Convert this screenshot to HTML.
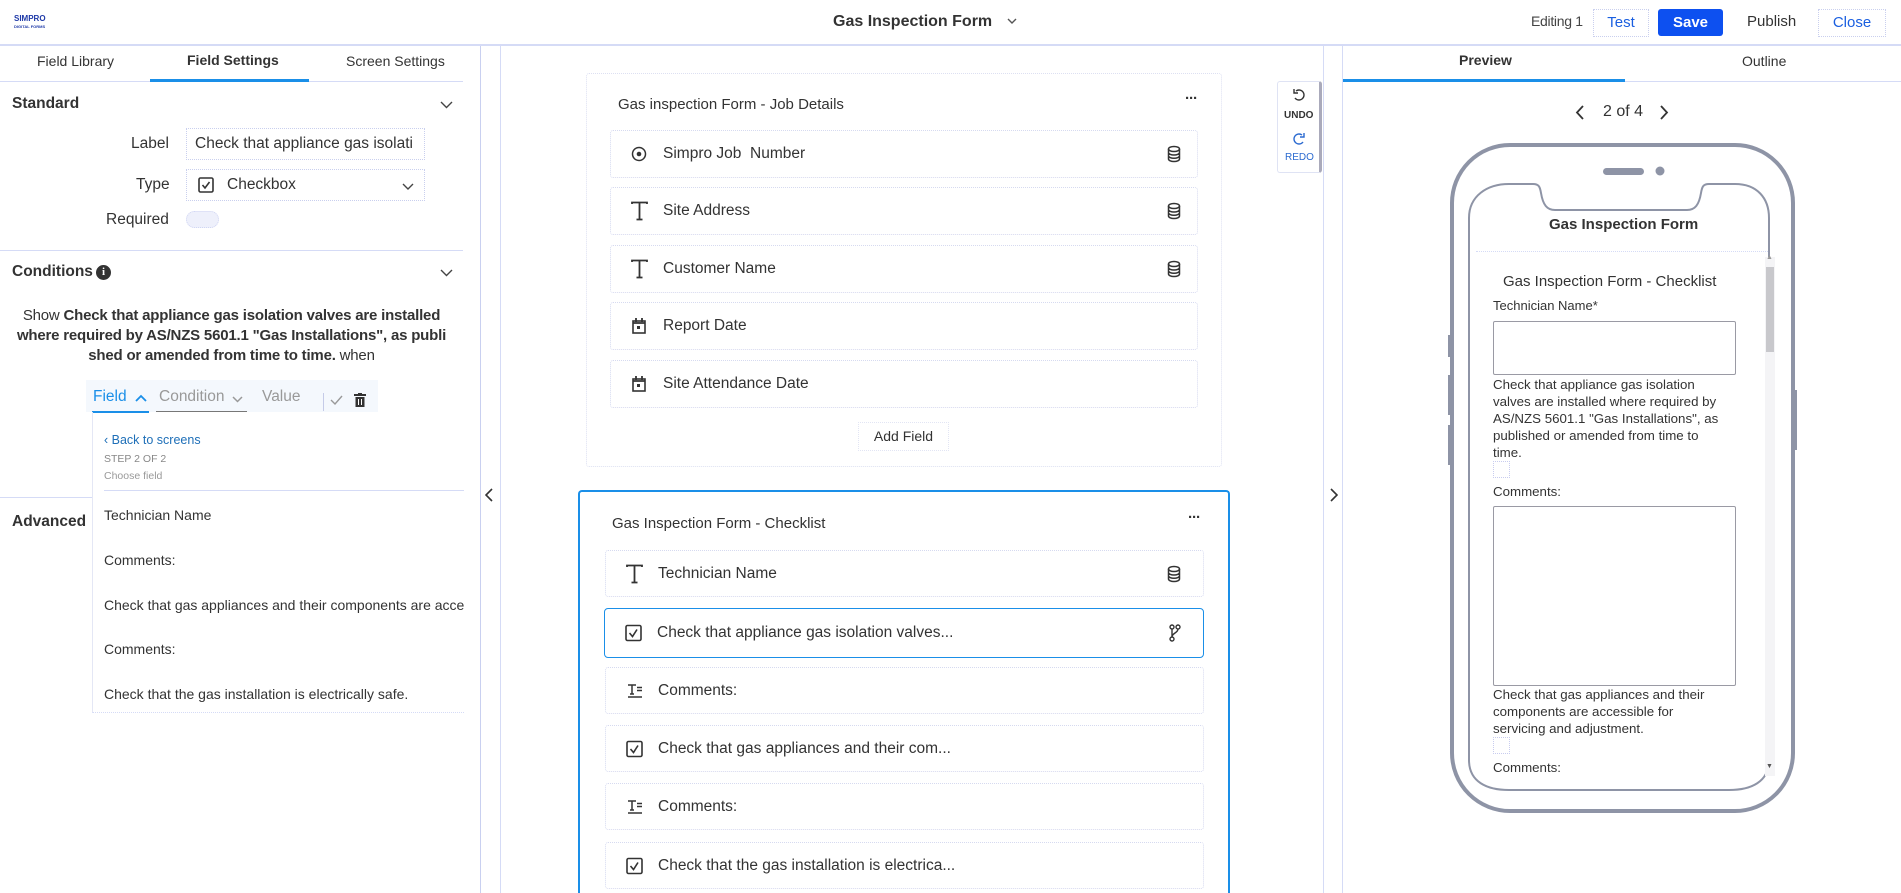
<!DOCTYPE html>
<html><head><meta charset="utf-8">
<style>
*{box-sizing:border-box;margin:0;padding:0}
html{height:893px;overflow:hidden}
body{width:1901px;height:893px;overflow:hidden;background:#fff;font-family:"Liberation Sans",sans-serif;color:#333;position:relative}
.a{position:absolute;white-space:nowrap}
.dl{border:1px dotted #c9cfee}
.row{position:absolute;border:1px dotted #d6daf0;border-radius:3px}
.row .t{position:absolute;top:50%;transform:translateY(-50%);font-size:15.5px;color:#333}
.row svg{position:absolute;top:50%;transform:translateY(-50%)}
</style></head><body>

<!-- top bar -->
<div class="a" style="left:14px;top:15px;font:bold 8px 'Liberation Sans';color:#1f3aa8;line-height:7px">SIMPRO<br><span style="font-size:4px">DIGITAL FORMS</span></div>
<div class="a" style="left:833px;top:13px;font-size:16px;font-weight:bold;color:#333">Gas Inspection Form</div>
<svg class="a" style="left:1007px;top:18px" width="10" height="7"><path d="M1 1l4 4 4-4" fill="none" stroke="#555" stroke-width="1.4"/></svg>
<div class="a" style="left:1531px;top:13px;font-size:14px;color:#444;letter-spacing:-0.3px">Editing 1</div>
<div class="a dl" style="left:1593px;top:9px;width:56px;height:28px;text-align:center;line-height:26px;font-size:15px;color:#1a5fe0">Test</div>
<div class="a" style="left:1658px;top:9px;width:65px;height:27px;background:#0d50f0;border-radius:3px;color:#fff;font-weight:bold;text-align:center;line-height:27px;font-size:15px">Save</div>
<div class="a" style="left:1747px;top:13px;font-size:15px;color:#333">Publish</div>
<div class="a dl" style="left:1818px;top:9px;width:68px;height:28px;text-align:center;line-height:26px;font-size:15px;color:#1a5fe0">Close</div>
<div class="a" style="left:0;top:44px;width:1901px;height:2px;background:#d5dbf6"></div>

<!-- left panel -->
<div class="a" style="left:480px;top:46px;width:1px;height:847px;background:#c9d0f0"></div>
<div class="a" style="left:37px;top:53px;font-size:14px">Field Library</div>
<div class="a" style="left:187px;top:52px;font-size:14px;font-weight:bold">Field Settings</div>
<div class="a" style="left:346px;top:53px;font-size:14px">Screen Settings</div>
<div class="a" style="left:0;top:81px;width:463px;height:1px;background:#d5dbf6"></div>
<div class="a" style="left:150px;top:79px;width:159px;height:3px;background:#1a8fe8"></div>
<div class="a" style="left:12px;top:95px;font-size:15.5px;font-weight:bold">Standard</div>
<svg class="a" style="left:440px;top:101px" width="13" height="8"><path d="M1 1l5.5 5.5L12 1" fill="none" stroke="#444" stroke-width="1.4"/></svg>
<div class="a" style="left:131px;top:135px;font-size:15.5px">Label</div>
<div class="a dl" style="left:186px;top:128px;width:239px;height:32px;font-size:15.5px;padding:6px 8px;overflow:hidden">Check that appliance gas isolati</div>
<div class="a" style="left:136px;top:176px;font-size:15.5px">Type</div>
<div class="a dl" style="left:186px;top:169px;width:239px;height:32px"></div>
<svg class="a" style="left:198px;top:177px" width="17" height="17"><rect x="1" y="1" width="14" height="14" rx="1.5" fill="none" stroke="#333" stroke-width="1.6"/><path d="M4.5 8l2.5 3 4.5-6" fill="none" stroke="#333" stroke-width="1.6"/></svg>
<div class="a" style="left:227px;top:176px;font-size:15.5px">Checkbox</div>
<svg class="a" style="left:402px;top:183px" width="12" height="8"><path d="M1 1l5 5 5-5" fill="none" stroke="#444" stroke-width="1.4"/></svg>
<div class="a" style="left:106px;top:211px;font-size:15.5px">Required</div>
<div class="a" style="left:186px;top:211px;width:33px;height:17px;border-radius:9px;background:#eef0fb;border:1px dotted #d0d5f3"></div>
<div class="a" style="left:0;top:250px;width:463px;height:1px;background:#d5dbf6"></div>
<div class="a" style="left:12px;top:263px;font-size:15.5px;font-weight:bold">Conditions</div>
<div class="a" style="left:96px;top:265px;width:15px;height:15px;border-radius:50%;background:#333;color:#fff;font:bold 11px 'Liberation Serif';text-align:center;line-height:15px">i</div>
<svg class="a" style="left:440px;top:269px" width="13" height="8"><path d="M1 1l5.5 5.5L12 1" fill="none" stroke="#444" stroke-width="1.4"/></svg>
<div class="a" style="left:0px;top:306px;width:463px;text-align:center;font-size:15px;line-height:20px;letter-spacing:-0.2px">Show <b>Check that appliance gas isolation valves are installed</b><br><b>where required by AS/NZS 5601.1 "Gas Installations", as publi</b><br><b>shed or amended from time to time.</b> when</div>
<div class="a" style="left:86px;top:380px;width:292px;height:32px;background:#f4f8fd"></div>
<div class="a" style="left:93px;top:388px;font-size:15.5px;color:#1a8fe8">Field</div>
<svg class="a" style="left:135px;top:394px" width="12" height="8"><path d="M1 7l5-5 5 5" fill="none" stroke="#1a8fe8" stroke-width="1.8"/></svg>
<div class="a" style="left:92px;top:411px;width:57px;height:2px;background:#1a8fe8"></div>
<div class="a" style="left:159px;top:388px;font-size:15.5px;color:#999">Condition</div>
<svg class="a" style="left:232px;top:396px" width="11" height="7"><path d="M1 1l4.5 4.5L10 1" fill="none" stroke="#999" stroke-width="1.5"/></svg>
<div class="a" style="left:156px;top:411px;width:91px;height:1px;background:#777"></div>
<div class="a" style="left:262px;top:388px;font-size:15.5px;color:#999">Value</div>
<div class="a" style="left:323px;top:393px;width:1px;height:18px;background:#c5cbe8"></div>
<svg class="a" style="left:330px;top:395px" width="13" height="10"><path d="M1 5l4 4 7-8" fill="none" stroke="#999" stroke-width="1.4"/></svg>
<svg class="a" style="left:354px;top:393px" width="12" height="14"><path d="M0 2h12M4 1h4" stroke="#333" stroke-width="2"/><rect x="1.5" y="4" width="9" height="10" fill="#333"/><path d="M4.5 6v6M7.5 6v6" stroke="#fff" stroke-width="1"/></svg>
<div class="a" style="left:92px;top:412px;width:372px;height:301px;border-left:1px solid #e4e7f5;border-bottom:1px dotted #d5dbf6"></div>
<div class="a" style="left:0;top:497px;width:92px;height:1px;background:#d5dbf6"></div>
<div class="a" style="left:12px;top:513px;font-size:15.5px;font-weight:bold">Advanced</div>
<div class="a" style="left:104px;top:433px;font-size:12.5px;color:#1e6fb8">&lsaquo; Back to screens</div>
<div class="a" style="left:104px;top:453px;font-size:10.5px;color:#888">STEP 2 OF 2</div>
<div class="a" style="left:104px;top:470px;font-size:10.5px;color:#999">Choose field</div>
<div class="a" style="left:104px;top:490px;width:360px;height:1px;background:#d5dbf6"></div>
<div class="a" style="left:104px;top:507px;font-size:14px">Technician Name</div>
<div class="a" style="left:104px;top:552px;font-size:14px">Comments:</div>
<div class="a" style="left:104px;top:597px;font-size:14px;width:360px;overflow:hidden">Check that gas appliances and their components are accessible</div>
<div class="a" style="left:104px;top:641px;font-size:14px">Comments:</div>
<div class="a" style="left:104px;top:686px;font-size:14px">Check that the gas installation is electrically safe.</div>

<!-- middle -->
<div class="a" style="left:500px;top:46px;width:1px;height:847px;background:#d5dbf6"></div>
<div class="a" style="left:1323px;top:46px;width:1px;height:847px;background:#d5dbf6"></div>
<div class="a" style="left:1342px;top:46px;width:1px;height:847px;background:#d5dbf6"></div>
<svg class="a" style="left:485px;top:488px" width="8" height="14"><path d="M7 1L1 7l6 6" fill="none" stroke="#333" stroke-width="1.6"/></svg>
<svg class="a" style="left:1330px;top:488px" width="8" height="14"><path d="M1 1l6 6-6 6" fill="none" stroke="#333" stroke-width="1.6"/></svg>

<div class="a" style="left:586px;top:73px;width:636px;height:394px;border:1px dotted #dde0f2;border-radius:3px"></div>
<div class="a" style="left:618px;top:96px;font-size:15px">Gas inspection Form - Job Details</div>
<div class="a" style="left:1185px;top:90px;font-size:15px;font-weight:bold;letter-spacing:-1px">···</div>

<div class="row" style="left:610px;top:130px;width:588px;height:48px"><svg style="left:20px" width="16" height="16"><circle cx="8" cy="8" r="6.5" fill="none" stroke="#333" stroke-width="1.5"/><circle cx="8" cy="8" r="2.3" fill="#333"/></svg><div class="t" style="left:52px">Simpro Job&nbsp; Number</div><svg style="left:556px" width="14" height="17"><g fill="none" stroke="#333" stroke-width="1.5"><ellipse cx="7" cy="3.5" rx="5.5" ry="2.5"/><path d="M1.5 3.5v10c0 1.4 2.5 2.5 5.5 2.5s5.5-1.1 5.5-2.5v-10M1.5 7c0 1.4 2.5 2.5 5.5 2.5S12.5 8.4 12.5 7M1.5 10.3c0 1.4 2.5 2.5 5.5 2.5s5.5-1.1 5.5-2.5"/></g></svg></div>
<div class="row" style="left:610px;top:187px;width:588px;height:48px"><svg style="left:20px" width="17" height="19"><path d="M1 2.5V1h15v1.5M8.5 1v17M5.5 18h6" fill="none" stroke="#333" stroke-width="1.8"/></svg><div class="t" style="left:52px">Site Address</div><svg style="left:556px" width="14" height="17"><g fill="none" stroke="#333" stroke-width="1.5"><ellipse cx="7" cy="3.5" rx="5.5" ry="2.5"/><path d="M1.5 3.5v10c0 1.4 2.5 2.5 5.5 2.5s5.5-1.1 5.5-2.5v-10M1.5 7c0 1.4 2.5 2.5 5.5 2.5S12.5 8.4 12.5 7M1.5 10.3c0 1.4 2.5 2.5 5.5 2.5s5.5-1.1 5.5-2.5"/></g></svg></div>
<div class="row" style="left:610px;top:245px;width:588px;height:48px"><svg style="left:20px" width="17" height="19"><path d="M1 2.5V1h15v1.5M8.5 1v17M5.5 18h6" fill="none" stroke="#333" stroke-width="1.8"/></svg><div class="t" style="left:52px">Customer Name</div><svg style="left:556px" width="14" height="17"><g fill="none" stroke="#333" stroke-width="1.5"><ellipse cx="7" cy="3.5" rx="5.5" ry="2.5"/><path d="M1.5 3.5v10c0 1.4 2.5 2.5 5.5 2.5s5.5-1.1 5.5-2.5v-10M1.5 7c0 1.4 2.5 2.5 5.5 2.5S12.5 8.4 12.5 7M1.5 10.3c0 1.4 2.5 2.5 5.5 2.5s5.5-1.1 5.5-2.5"/></g></svg></div>
<div class="row" style="left:610px;top:302px;width:588px;height:48px"><svg style="left:21px" width="14" height="16"><rect x="1" y="3" width="12" height="12" fill="none" stroke="#333" stroke-width="1.6"/><path d="M1 5h12M4 0v4M10 0v4" stroke="#333" stroke-width="1.8"/><rect x="5" y="8" width="3" height="3" fill="#333"/></svg><div class="t" style="left:52px">Report Date</div></div>
<div class="row" style="left:610px;top:360px;width:588px;height:48px"><svg style="left:21px" width="14" height="16"><rect x="1" y="3" width="12" height="12" fill="none" stroke="#333" stroke-width="1.6"/><path d="M1 5h12M4 0v4M10 0v4" stroke="#333" stroke-width="1.8"/><rect x="5" y="8" width="3" height="3" fill="#333"/></svg><div class="t" style="left:52px">Site Attendance Date</div></div>
<div class="a dl" style="left:858px;top:422px;width:91px;height:29px;text-align:center;line-height:27px;font-size:14px;border-color:#e2e5f4">Add Field</div>

<div class="a" style="left:1277px;top:81px;width:45px;height:92px;border:1px solid #dfe3f4;border-right:3px solid #aab;border-radius:3px"></div>
<svg class="a" style="left:1292px;top:88px" width="14" height="14"><path d="M4 3a5 5 0 1 1-1 7" fill="none" stroke="#333" stroke-width="1.4"/><path d="M2 1v4h4" fill="none" stroke="#333" stroke-width="1.4"/></svg>
<div class="a" style="left:1284px;top:110px;font-size:10px;font-weight:bold;color:#333">UNDO</div>
<svg class="a" style="left:1292px;top:132px" width="14" height="14"><path d="M10 3a5 5 0 1 0 1 7" fill="none" stroke="#2b6ad0" stroke-width="1.4"/><path d="M12 1v4H8" fill="none" stroke="#2b6ad0" stroke-width="1.4"/></svg>
<div class="a" style="left:1285px;top:152px;font-size:10px;color:#2b6ad0">REDO</div>

<div class="a" style="left:578px;top:490px;width:652px;height:403px;border:2px solid #1a8fe8;border-bottom:none;border-radius:4px 4px 0 0"></div>
<div class="a" style="left:612px;top:515px;font-size:15px">Gas Inspection Form - Checklist</div>
<div class="a" style="left:1188px;top:509px;font-size:15px;font-weight:bold;letter-spacing:-1px">···</div>
<div class="row" style="left:605px;top:550px;width:599px;height:47px"><svg style="left:20px" width="17" height="19"><path d="M1 2.5V1h15v1.5M8.5 1v17M5.5 18h6" fill="none" stroke="#333" stroke-width="1.8"/></svg><div class="t" style="left:52px">Technician Name</div><svg style="left:561px" width="14" height="17"><g fill="none" stroke="#333" stroke-width="1.5"><ellipse cx="7" cy="3.5" rx="5.5" ry="2.5"/><path d="M1.5 3.5v10c0 1.4 2.5 2.5 5.5 2.5s5.5-1.1 5.5-2.5v-10M1.5 7c0 1.4 2.5 2.5 5.5 2.5S12.5 8.4 12.5 7M1.5 10.3c0 1.4 2.5 2.5 5.5 2.5s5.5-1.1 5.5-2.5"/></g></svg></div>
<div class="row" style="left:604px;top:608px;width:600px;height:50px;border:1px solid #1a8fe8;border-radius:4px"><svg style="left:20px" width="17" height="17"><rect x="1" y="1" width="15" height="15" rx="1.5" fill="none" stroke="#333" stroke-width="1.6"/><path d="M4.5 8.5l3 3.5 4.5-7" fill="none" stroke="#333" stroke-width="1.6"/></svg><div class="t" style="left:52px">Check that appliance gas isolation valves...</div><svg style="left:564px" width="12" height="18"><g fill="none" stroke="#333" stroke-width="1.4"><circle cx="3" cy="3" r="2"/><circle cx="9" cy="3" r="2"/><circle cx="3" cy="15" r="2"/><path d="M3 5v8M9 5c0 4-6 4-6 8"/></g></svg></div>
<div class="row" style="left:605px;top:667px;width:599px;height:47px"><svg style="left:21px" width="16" height="15"><path d="M1 1.5h8M5 1.5v9M3 10.5h4M10 4h5M10 7h5M1 13.5h14" fill="none" stroke="#333" stroke-width="1.5"/></svg><div class="t" style="left:52px">Comments:</div></div>
<div class="row" style="left:605px;top:725px;width:599px;height:47px"><svg style="left:20px" width="17" height="17"><rect x="1" y="1" width="15" height="15" rx="1.5" fill="none" stroke="#333" stroke-width="1.6"/><path d="M4.5 8.5l3 3.5 4.5-7" fill="none" stroke="#333" stroke-width="1.6"/></svg><div class="t" style="left:52px">Check that gas appliances and their com...</div></div>
<div class="row" style="left:605px;top:783px;width:599px;height:47px"><svg style="left:21px" width="16" height="15"><path d="M1 1.5h8M5 1.5v9M3 10.5h4M10 4h5M10 7h5M1 13.5h14" fill="none" stroke="#333" stroke-width="1.5"/></svg><div class="t" style="left:52px">Comments:</div></div>
<div class="row" style="left:605px;top:842px;width:599px;height:47px"><svg style="left:20px" width="17" height="17"><rect x="1" y="1" width="15" height="15" rx="1.5" fill="none" stroke="#333" stroke-width="1.6"/><path d="M4.5 8.5l3 3.5 4.5-7" fill="none" stroke="#333" stroke-width="1.6"/></svg><div class="t" style="left:52px">Check that the gas installation is electrica...</div></div>

<!-- right panel -->
<div class="a" style="left:1459px;top:52px;font-size:14px;font-weight:bold">Preview</div>
<div class="a" style="left:1742px;top:53px;font-size:14px">Outline</div>
<div class="a" style="left:1343px;top:81px;width:558px;height:1px;background:#d5dbf6"></div>
<div class="a" style="left:1343px;top:79px;width:282px;height:3px;background:#1a8fe8"></div>
<svg class="a" style="left:1575px;top:105px" width="9" height="15"><path d="M8 1L2 7.5 8 14" fill="none" stroke="#333" stroke-width="1.8"/></svg>
<div class="a" style="left:1603px;top:103px;font-size:16px">2 of 4</div>
<svg class="a" style="left:1660px;top:105px" width="9" height="15"><path d="M1 1l6 6.5L1 14" fill="none" stroke="#333" stroke-width="1.8"/></svg>

<svg class="a" style="left:1440px;top:140px" width="370" height="680">
<g fill="none" stroke="#8e94a6">
<rect x="12" y="5" width="341" height="666" rx="58" stroke-width="4"/>
<path d="M29 135V78c0-22 18-34 40-34h24c6 0 7 3 8 9c2 12 6 17 14 17h132c8 0 12-5 14-17c1-6 2-9 8-9h26c22 0 34 14 34 34v542c0 22-18 30-40 30H69c-22 0-40-8-40-30Z" stroke-width="2"/>
</g>
<rect x="163" y="28" width="41" height="7" rx="3.5" fill="#8e94a6"/>
<circle cx="220" cy="31" r="4.5" fill="#8e94a6"/>
<rect x="8" y="195" width="4" height="22" fill="#8e94a6"/><rect x="8" y="235" width="4" height="40" fill="#8e94a6"/><rect x="8" y="285" width="4" height="40" fill="#8e94a6"/><rect x="353" y="250" width="4" height="60" fill="#8e94a6"/>
</svg>
<div class="a" style="left:1549px;top:216px;font-size:15px;font-weight:bold">Gas Inspection Form</div>
<div class="a" style="left:1476px;top:251px;width:292px;height:1px;border-top:1px dotted #d5dbf6"></div>
<div class="a" style="left:1765px;top:257px;width:10px;height:519px;background:#f4f4f6"></div>
<div class="a" style="left:1766px;top:267px;width:8px;height:85px;background:#c8c8cc"></div>
<div class="a" style="left:1766px;top:254px;font-size:7px;color:#999">▲</div>
<div class="a" style="left:1766px;top:763px;font-size:7px;color:#555">▼</div>
<div class="a" style="left:1503px;top:273px;font-size:15px">Gas Inspection Form - Checklist</div>
<div class="a" style="left:1493px;top:298px;font-size:13px">Technician Name*</div>
<div class="a" style="left:1493px;top:321px;width:243px;height:54px;border:1px solid #9a9aa4;border-radius:2px"></div>
<div class="a" style="left:1493px;top:376px;font-size:13.3px;line-height:17px">Check that appliance gas isolation<br>valves are installed where required by<br>AS/NZS 5601.1 "Gas Installations", as<br>published or amended from time to<br>time.</div>
<div class="a" style="left:1493px;top:461px;width:17px;height:17px;border:1px dotted #c8ccef"></div>
<div class="a" style="left:1493px;top:484px;font-size:13.3px">Comments:</div>
<div class="a" style="left:1493px;top:506px;width:243px;height:180px;border:1px solid #9a9aa4;border-radius:2px"></div>
<div class="a" style="left:1493px;top:686px;font-size:13.3px;line-height:17px">Check that gas appliances and their<br>components are accessible for<br>servicing and adjustment.</div>
<div class="a" style="left:1493px;top:737px;width:17px;height:17px;border:1px dotted #c8ccef"></div>
<div class="a" style="left:1493px;top:760px;font-size:13.3px">Comments:</div>
</body></html>
